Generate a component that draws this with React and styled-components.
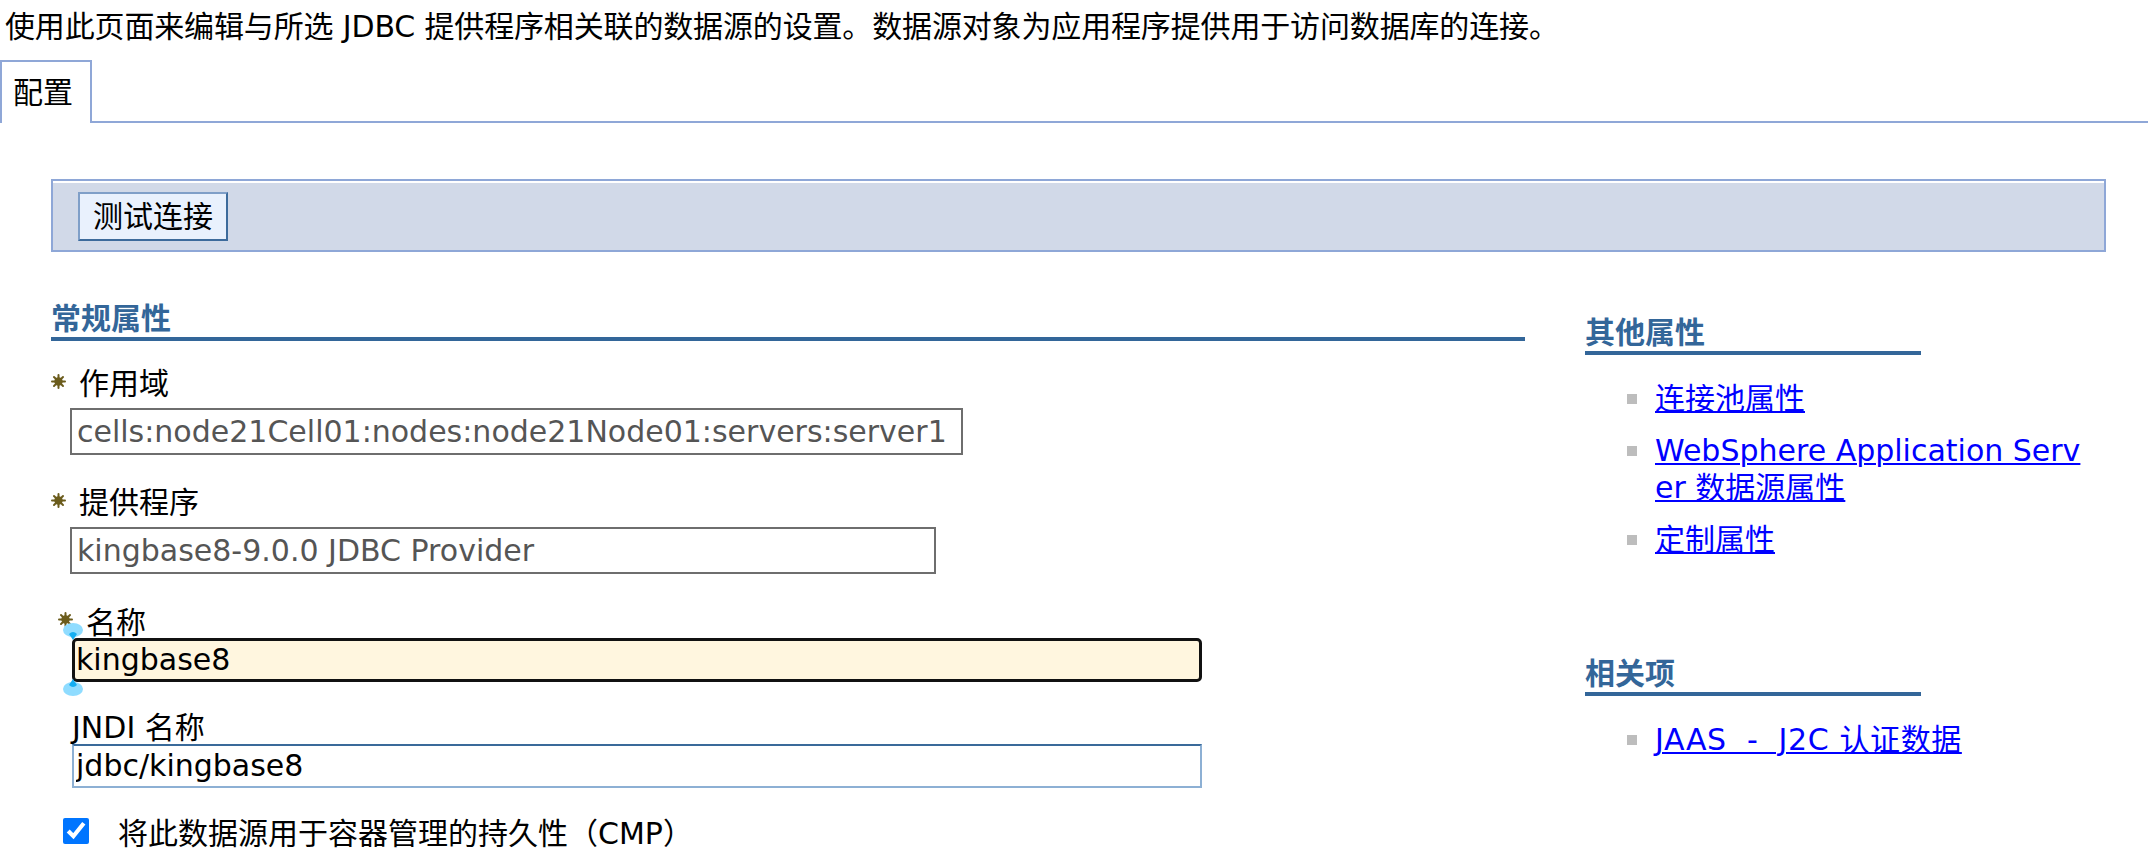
import React from 'react';
import styled, { createGlobalStyle } from 'styled-components';

const GlobalStyle = createGlobalStyle`
  body {
    margin: 0;
    background: #fff;
    color: #000;
    font-family: "DejaVu Sans", "Noto Sans CJK SC", sans-serif;
    font-size: 30px;
  }
`;

const Description = styled.div`
  padding: 7px 0 0 5px;
  line-height: 40px;
  white-space: nowrap;
  letter-spacing: -0.15px;
`;

const TabBar = styled.div`
  display: flex;
  margin-top: 13px;
  height: 61px;
  border-bottom: 2px solid #8fa7d7;
`;

const Tab = styled.div`
  box-sizing: border-box;
  width: 92px;
  height: 63px;
  margin-bottom: -2px;
  padding-left: 11px;
  border: 2px solid #8fa7d7;
  border-bottom: none;
  background: #fff;
  line-height: 62px;
`;

const Content = styled.div`
  padding: 0 42px 0 51px;
`;

const ButtonBar = styled.div`
  box-sizing: border-box;
  height: 73px;
  margin-top: 56px;
  padding: 11px 0 0 25px;
  border: 2px solid #8ea7d7;
  box-shadow: inset 0 2px 0 #fff;
  background: #d1d9e8;
`;

const Button = styled.button`
  box-sizing: border-box;
  width: 150px;
  height: 49px;
  padding: 0;
  border: 2px solid;
  border-color: #7f9fc8 #3d6b9c #3d6b9c #7f9fc8;
  background: #e9f1fd;
  color: #000;
  font: inherit;
  line-height: 45px;
`;

const Columns = styled.div`
  display: flex;
  align-items: flex-start;
  margin-top: 49px;
`;

const LeftColumn = styled.div`
  width: 1474px;
`;

const RightColumn = styled.div`
  margin-left: 60px;
  padding-top: 14px;
`;

const SectionHeading = styled.div`
  width: ${(p) => p.$width || 'auto'};
  margin-top: ${(p) => p.$top || 0}px;
  line-height: 36px;
  font-weight: bold;
  color: #336699;
  border-bottom: 4px solid #336699;
`;

const Label = styled.div`
  display: flex;
  align-items: center;
  height: 36px;
  margin-top: ${(p) => p.$top}px;
  padding-left: ${(p) => p.$indent || 0}px;
`;

const Star = styled.svg`
  width: 15px;
  height: 15px;
  margin-right: 13px;
  flex-shrink: 0;
`;

const TextInput = styled.input`
  display: block;
  box-sizing: border-box;
  width: ${(p) => p.$width}px;
  height: 47px;
  margin: 9px 0 0 19px;
  padding: 0 5px;
  border: 2px solid #6e6e6e;
  border-radius: 0;
  background: #fff;
  color: #555;
  font: inherit;
  outline: none;
`;

const FocusedInput = styled(TextInput)`
  height: 44px;
  margin: 0 0 0 21px;
  padding: 0 1px;
  border: 3px solid #111;
  border-radius: 5px;
  background: #fff6df;
  color: #000;
`;

const BlueInput = styled(TextInput)`
  height: 44px;
  margin: 0.5px 0 0 21px;
  padding: 0 2px;
  border-color: #3a6a9a #8db0d4 #8db0d4 #8db0d4;
  color: #000;
`;

const InputWrap = styled.div`
  position: relative;
`;

const Handle = styled.svg`
  position: absolute;
  left: 12px;
  top: ${(p) => p.$top}px;
  width: 20px;
  height: 17px;
`;

const CheckRow = styled.label`
  display: flex;
  align-items: center;
  height: 36px;
  margin-top: 25px;
  padding-left: 12px;
  gap: 29px;
`;

const Check = styled.input`
  width: 26px;
  height: 26px;
  margin: 0;
  accent-color: #0075ff;
`;

const LinkList = styled.ul`
  list-style: none;
  margin: 25px 0 0;
  padding: 0 0 0 42px;
`;

const LinkItem = styled.li`
  display: flex;
  align-items: flex-start;
  line-height: 37px;
  margin-top: ${(p) => (p.$first ? 0 : 15)}px;

  &::before {
    content: '';
    width: 10px;
    height: 10px;
    margin: 14px 18px 0 0;
    background: #bdbdbd;
    flex-shrink: 0;
  }
`;

const Link = styled.a`
  display: block;
  max-width: 437px;
  color: #0000ff;
  text-decoration: underline;
  text-decoration-thickness: 2px;
  text-underline-offset: 2px;
  word-break: break-all;
  letter-spacing: ${(p) => p.$spacing || 0}px;
`;

const StarIcon = () => (
  <Star viewBox="0 0 15 15">
    <g stroke="#6b5c1c" strokeWidth="2" strokeLinecap="round">
      <line x1="7.5" y1="1" x2="7.5" y2="14" />
      <line x1="1" y1="7.5" x2="14" y2="7.5" />
      <line x1="3" y1="3" x2="12" y2="12" />
      <line x1="12" y1="3" x2="3" y2="12" />
    </g>
    <circle cx="7.5" cy="7.5" r="4.2" fill="#6b5c1c" />
  </Star>
);

const FieldLabel = ({ children, required, top, indent }) => (
  <Label $top={top} $indent={indent}>
    {required && <StarIcon />}
    <span>{children}</span>
  </Label>
);

const App = () => {
  return (
    <>
      <GlobalStyle />
      <Description>
        使用此页面来编辑与所选 JDBC 提供程序相关联的数据源的设置。数据源对象为应用程序提供用于访问数据库的连接。
      </Description>
      <TabBar>
        <Tab>配置</Tab>
      </TabBar>

      <Content>
        <ButtonBar>
          <Button type="button">测试连接</Button>
        </ButtonBar>

        <Columns>
          <LeftColumn>
            <SectionHeading>常规属性</SectionHeading>

            <FieldLabel required top={22}>作用域</FieldLabel>
            <TextInput $width={893} readOnly value="cells:node21Cell01:nodes:node21Node01:servers:server1" />

            <FieldLabel required top={27}>提供程序</FieldLabel>
            <TextInput $width={866} readOnly value="kingbase8-9.0.0 JDBC Provider" />

            <FieldLabel required top={27.5} indent={7}>名称</FieldLabel>
            <InputWrap>
              <FocusedInput $width={1130} readOnly value="kingbase8" />
              <Handle $top={-15} viewBox="0 0 20 17">
                <ellipse cx="10" cy="7" rx="10" ry="7" fill="#8fdcff" />
                <path d="M10 17 L6 11 Q10 7 14 11 Z" fill="#14aef2" />
              </Handle>
              <Handle $top={41} viewBox="0 0 20 17">
                <ellipse cx="10" cy="10" rx="10" ry="7" fill="#8fdcff" />
                <path d="M10 0 L6 6 Q10 10 14 6 Z" fill="#14aef2" />
              </Handle>
            </InputWrap>

            <Label $top={25.5} $indent={21}>JNDI 名称</Label>
            <BlueInput $width={1130} readOnly value="jdbc/kingbase8" />

            <CheckRow>
              <Check type="checkbox" checked readOnly />
              <span>将此数据源用于容器管理的持久性（CMP）</span>
            </CheckRow>
          </LeftColumn>

          <RightColumn>
            <SectionHeading $width="336px">其他属性</SectionHeading>
            <LinkList>
              <LinkItem $first>
                <Link href="#">连接池属性</Link>
              </LinkItem>
              <LinkItem>
                <Link href="#">WebSphere Application Server 数据源属性</Link>
              </LinkItem>
              <LinkItem>
                <Link href="#">定制属性</Link>
              </LinkItem>
            </LinkList>

            <SectionHeading $width="336px" $top={98}>相关项</SectionHeading>
            <LinkList>
              <LinkItem $first>
                <Link href="#" $spacing={0.6}>JAAS&nbsp; -&nbsp; J2C 认证数据</Link>
              </LinkItem>
            </LinkList>
          </RightColumn>
        </Columns>
      </Content>
    </>
  );
};

export default App;
